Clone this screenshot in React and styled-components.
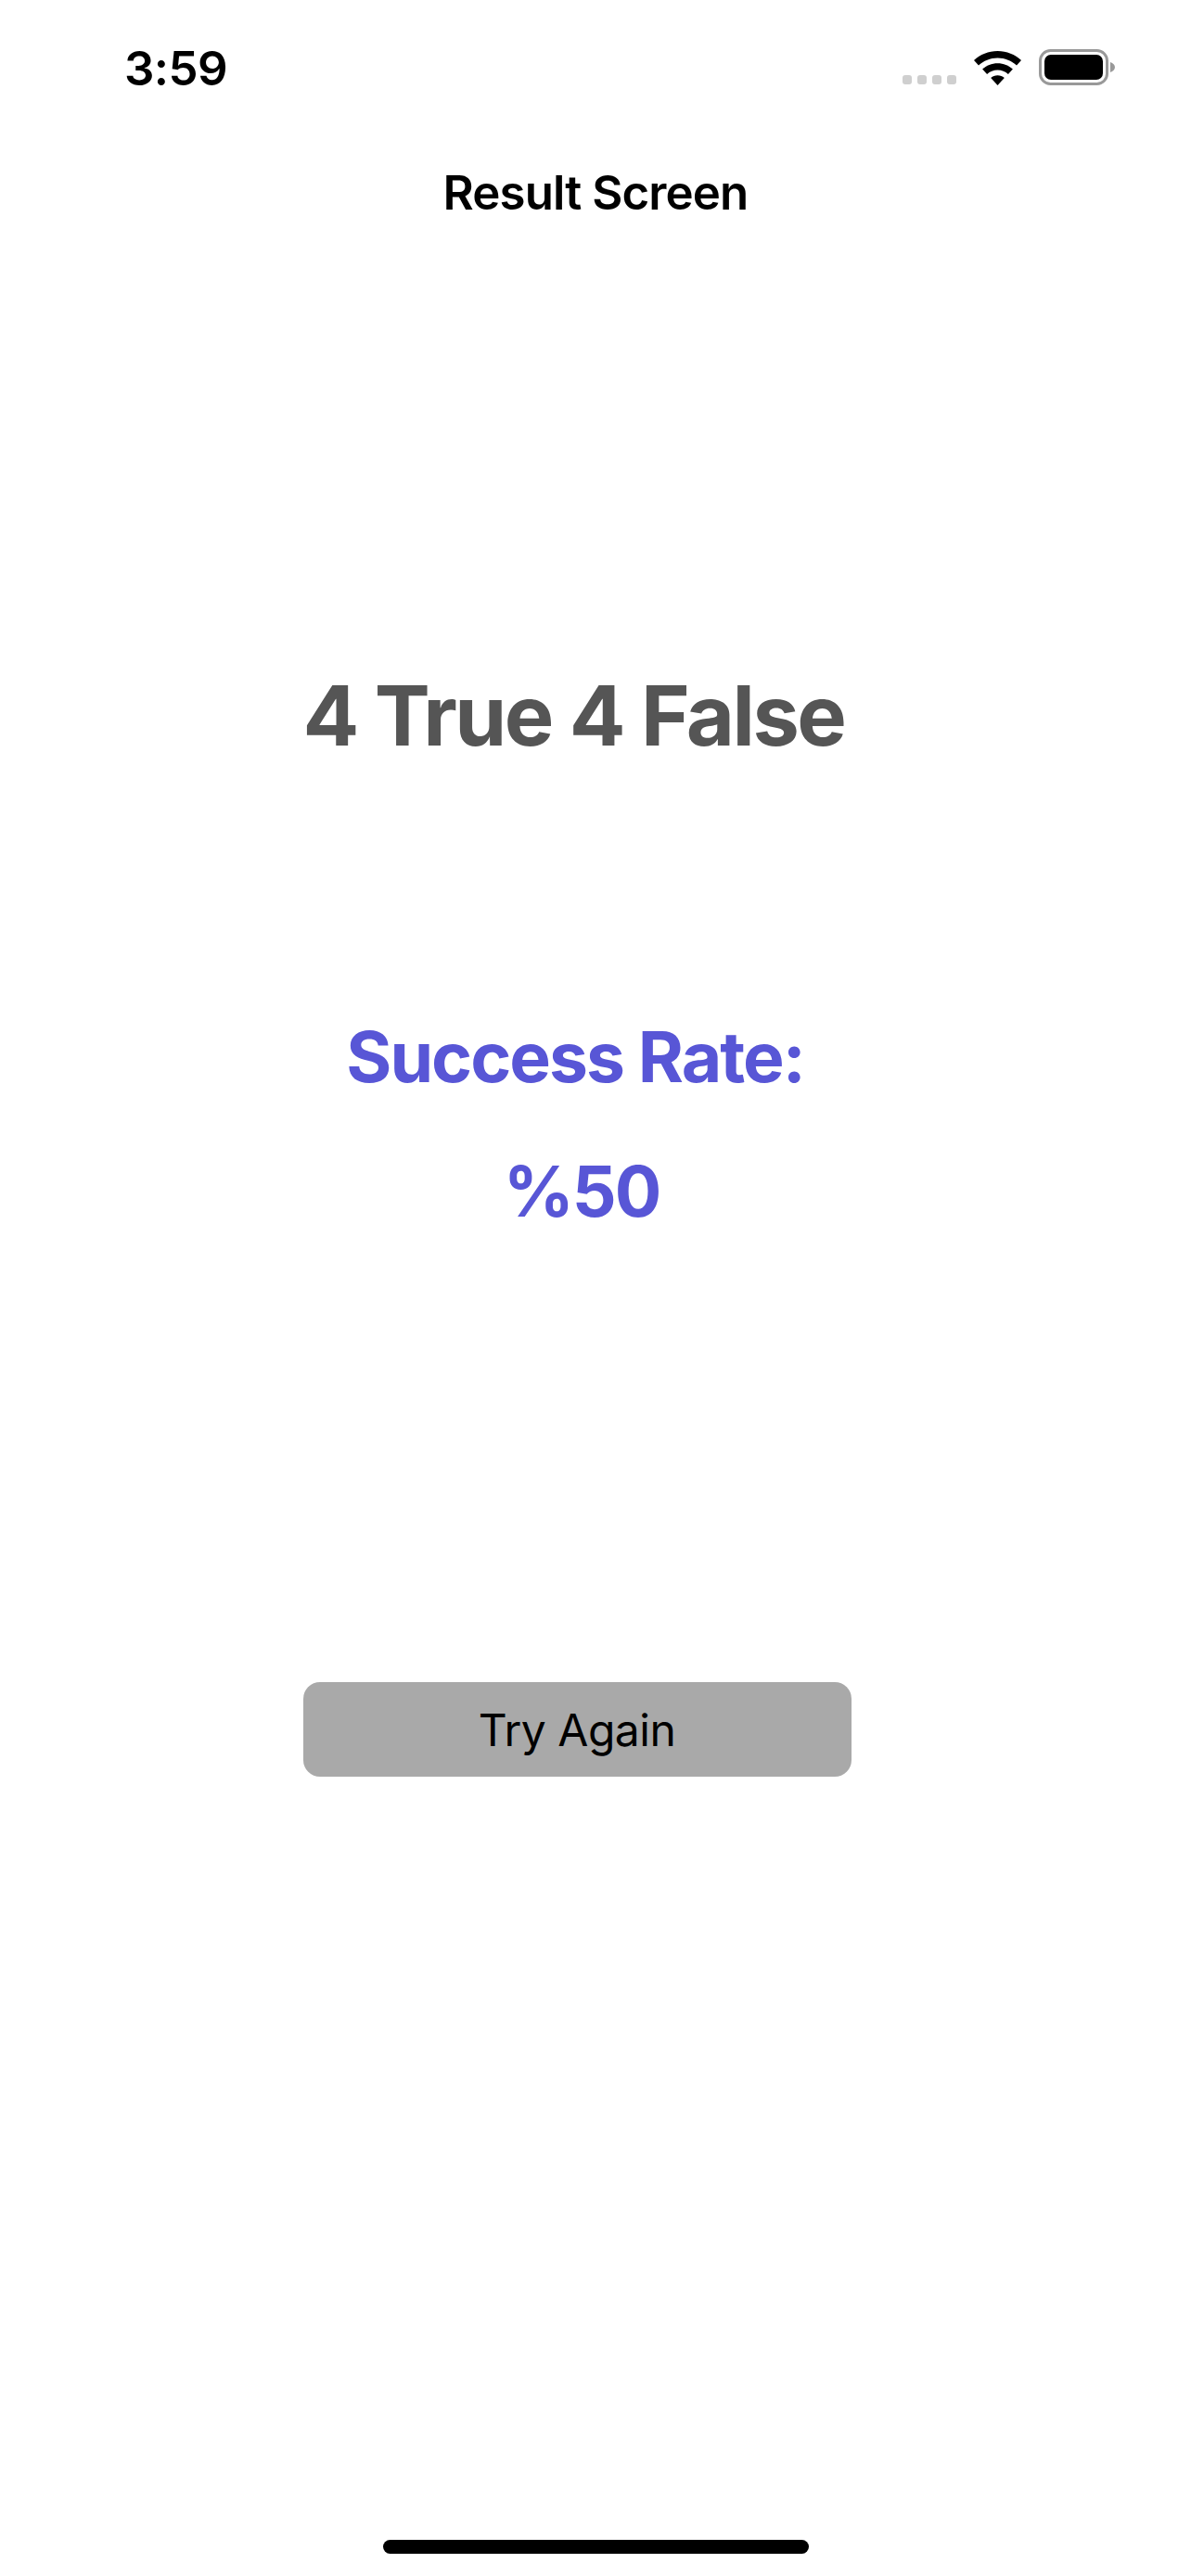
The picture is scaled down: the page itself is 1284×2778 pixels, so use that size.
import React from 'react'
import styled, { createGlobalStyle } from 'styled-components'

const GlobalStyle = createGlobalStyle`
  html, body {
    margin: 0;
    padding: 0;
    background: #fff;
  }
`

const Screen = styled.div`
  width: 1284px;
  height: 2778px;
  position: relative;
  overflow: hidden;
  display: flex;
  flex-direction: column;
  background: #fff;
  font-family: Inter, 'Liberation Sans', sans-serif;
`

const StatusBar = styled.div`
  height: 147px;
  flex: none;
  padding: 44px 82px 0 134px;
  box-sizing: border-box;
  display: flex;
  justify-content: space-between;
  align-items: flex-start;
`

const Clock = styled.div`
  font-size: 51px;
  line-height: 60px;
  font-weight: 600;
  color: #000;
  letter-spacing: -0.6px;
`

const StatusIcons = styled.div`
  display: flex;
  align-items: flex-end;
  gap: 19px;
  padding-top: 9px;
`

const SignalDots = styled.div`
  display: flex;
  gap: 6px;
  padding-bottom: 1px;
`

const SignalDot = styled.span`
  width: 10px;
  height: 10px;
  border-radius: 3px;
  background: #cfcfcf;
`

const NavBar = styled.header`
  flex: none;
  height: 120px;
  display: flex;
  justify-content: center;
`

const NavTitle = styled.h1`
  margin: 0;
  font-size: 51px;
  line-height: 122px;
  font-weight: 600;
  color: #000;
  letter-spacing: -0.9px;
`

const Content = styled.main`
  flex: 1;
  display: flex;
  flex-direction: column;
  align-items: center;
  padding: 450px 40px 0 0;
`

const Score = styled.div`
  font-size: 90px;
  line-height: 110px;
  font-weight: 700;
  color: #555555;
  letter-spacing: -2.5px;
  padding-right: 7px;
`

const Rate = styled.div`
  font-size: 75px;
  line-height: 90px;
  font-weight: 700;
  color: #5856d6;
  letter-spacing: -2px;
  margin-top: ${(p) => p.$top}px;
  padding-left: ${(p) => p.$left || 0}px;
  padding-right: ${(p) => p.$right || 0}px;
`

const RetryButton = styled.button`
  width: 591px;
  height: 102px;
  margin-top: 484px;
  border: none;
  border-radius: 18px;
  background: #a9a9a9;
  color: #000;
  font-family: inherit;
  font-size: 48px;
  font-weight: 400;
  letter-spacing: -0.5px;
  padding: 0;
`

const HomeIndicator = styled.div`
  position: absolute;
  left: 413px;
  bottom: 24px;
  width: 459px;
  height: 15px;
  border-radius: 8px;
  background: #000;
`

const WifiIcon = () => (
  <svg width="51" height="37" viewBox="0 0 51 37" fill="#000">
    <path d="M25.5 0C35.3 0 44.2 3.8 51 10L46 15.4C40.6 10.4 33.4 7.4 25.5 7.4S10.4 10.4 5 15.4L0 10C6.8 3.8 15.7 0 25.5 0Z" />
    <path d="M25.5 13.2C31.8 13.2 37.5 15.6 41.9 19.5L36.9 24.9C33.8 22.2 29.9 20.6 25.5 20.6S17.2 22.2 14.1 24.9L9.1 19.5C13.5 15.6 19.2 13.2 25.5 13.2Z" />
    <path d="M25.5 26.2C28.3 26.2 30.8 27.2 32.8 28.9L25.5 37L18.2 28.9C20.2 27.2 22.7 26.2 25.5 26.2Z" />
  </svg>
)

const BatteryIcon = () => (
  <svg width="82" height="39" viewBox="0 0 82 39">
    <rect x="1.5" y="1.5" width="72" height="36" rx="11" fill="none" stroke="#999" strokeWidth="3" />
    <rect x="6" y="6" width="63" height="27" rx="7" fill="#000" />
    <path d="M77 14C80 15 82 17 82 19.5S80 24 77 25Z" fill="#999" />
  </svg>
)

const App = () => (
  <Screen>
    <GlobalStyle />
    <StatusBar>
      <Clock>3:59</Clock>
      <StatusIcons>
        <SignalDots>
          <SignalDot />
          <SignalDot />
          <SignalDot />
          <SignalDot />
        </SignalDots>
        <WifiIcon />
        <BatteryIcon />
      </StatusIcons>
    </StatusBar>
    <NavBar>
      <NavTitle>Result Screen</NavTitle>
    </NavBar>
    <Content>
      <Score>4 True 4 False</Score>
      <Rate $top={268} $right={4}>Success Rate:</Rate>
      <Rate $top={55} $left={10}>%50</Rate>
      <RetryButton>Try Again</RetryButton>
    </Content>
    <HomeIndicator />
  </Screen>
)

export default App
